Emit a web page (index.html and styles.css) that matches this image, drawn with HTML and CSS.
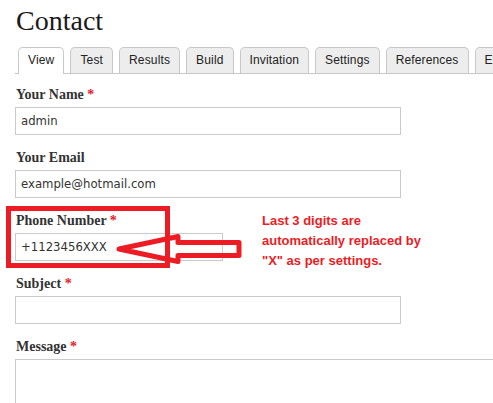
FILE: index.html
```html
<!DOCTYPE html>
<html>
<head>
<meta charset="utf-8">
<title>Contact</title>
<link rel="stylesheet" href="styles.css">
</head>
<body>
<div class="page">
  <h1 class="title">Contact</h1>
  <ul class="tabs">
    <li class="tab active">View</li>
    <li class="tab">Test</li>
    <li class="tab">Results</li>
    <li class="tab">Build</li>
    <li class="tab">Invitation</li>
    <li class="tab">Settings</li>
    <li class="tab">References</li>
    <li class="tab">Export</li>
  </ul>
  <form class="form">
    <div class="field">
      <label class="label">Your Name <span class="req">*</span></label>
      <div class="input wide">admin</div>
    </div>
    <div class="field">
      <label class="label">Your Email</label>
      <div class="input wide">example@hotmail.com</div>
    </div>
    <div class="field">
      <label class="label">Phone Number <span class="req">*</span></label>
      <div class="input narrow">+1123456XXX</div>
    </div>
    <div class="field">
      <label class="label">Subject <span class="req">*</span></label>
      <div class="input wide"></div>
    </div>
    <div class="field">
      <label class="label">Message <span class="req">*</span></label>
      <div class="input area"></div>
    </div>
  </form>

  <svg class="annot" width="493" height="403" viewBox="0 0 493 403">
    <rect x="8.5" y="208.5" width="159" height="57" fill="none" stroke="#ed1c24" stroke-width="5"/>
    <polygon points="119,249 178,236.5 178,242.5 239,242.5 239,255.5 178,255.5 178,261.5" fill="none" stroke="#ed1c24" stroke-width="5" stroke-linejoin="round"/>
  </svg>
  <div class="note">Last 3 digits are<br>automatically replaced by<br>"X" as per settings.</div>
</div>
</body>
</html>
```

FILE: styles.css
```css
html, body {
  margin: 0;
  padding: 0;
  overflow: hidden;
  background: #fff;
}
.page {
  position: relative;
  width: 493px;
  height: 403px;
  overflow: hidden;
  padding-left: 15px;
  box-sizing: border-box;
}
.title {
  margin: 5px 0 0 1px;
  font-family: "Liberation Serif", serif;
  font-weight: normal;
  font-size: 28px;
  line-height: 32px;
  color: #1a1a1a;
}
.tabs {
  list-style: none;
  margin: 10px 0 0 0;
  padding: 0 0 0 3px;
  display: flex;
  align-items: flex-end;
  height: 26px;
  border-bottom: 1px solid #c8c8c8;
  white-space: nowrap;
  width: 600px;
}
.tab {
  flex: none;
  box-sizing: border-box;
  height: 26px;
  margin-right: 6px;
  padding: 0 9px;
  border: 1px solid #c8c8c8;
  border-bottom: 0;
  border-radius: 5px 5px 0 0;
  background: #ededed;
  font-family: "Liberation Sans", Arial, sans-serif;
  font-size: 12px;
  letter-spacing: 0.15px;
  line-height: 25px;
  color: #222;
}
.tab.active {
  height: 27px;
  margin-bottom: -1px;
  background: #fff;
}
.form {
  margin: 0;
  padding-top: 12px;
}
.field {
  margin-bottom: 14px;
}
.label {
  display: block;
  margin: 0 0 3px 1px;
  font-family: "Liberation Serif", serif;
  font-weight: bold;
  font-size: 14px;
  line-height: 18px;
  color: #333;
}
.req {
  color: #e8202a;
}
.input {
  box-sizing: border-box;
  height: 28px;
  border: 1px solid #cacaca;
  padding: 0 5px;
  font-family: "DejaVu Sans", Verdana, sans-serif;
  font-size: 11.7px;
  line-height: 26px;
  color: #333;
  background: #fff;
}
.wide {
  width: 386px;
}
.narrow {
  width: 208px;
}
.area {
  width: 520px;
  height: 100px;
}
.annot {
  position: absolute;
  left: 0;
  top: 0;
  pointer-events: none;
}
.note {
  position: absolute;
  left: 262px;
  top: 211px;
  font-family: "Liberation Sans", Arial, sans-serif;
  font-weight: bold;
  font-size: 13px;
  line-height: 20px;
  color: #ed1c24;
  white-space: nowrap;
}
```
